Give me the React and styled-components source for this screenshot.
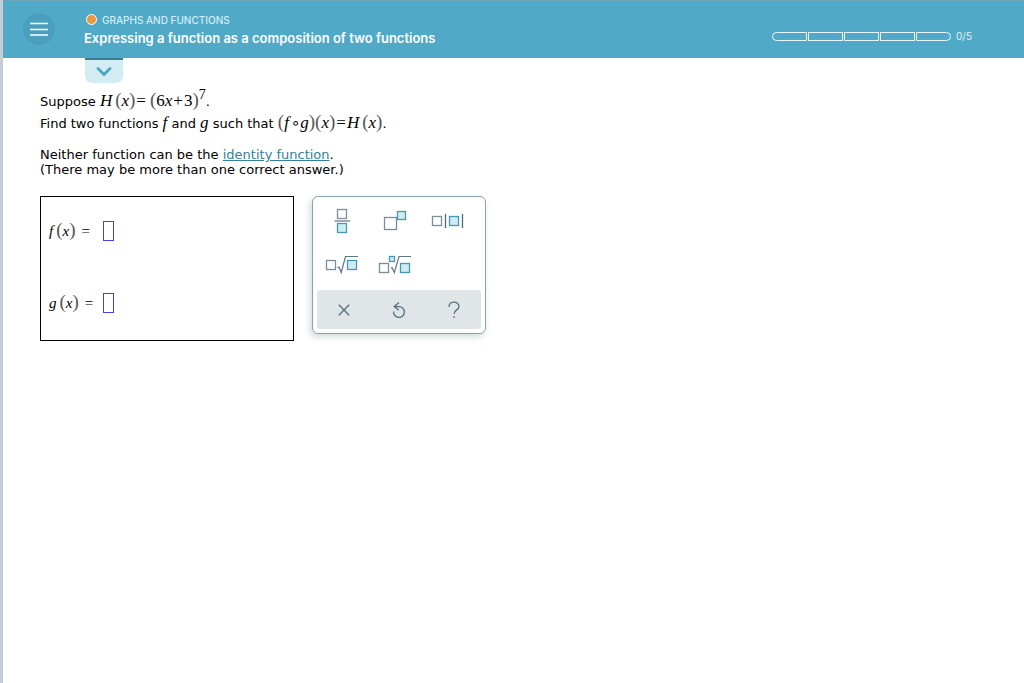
import React, { useState } from 'react';
import styled, { createGlobalStyle } from 'styled-components';

const SEGMENTS = [1, 2, 3, 4, 5];

const Box = ({ x, y, size, filled }) => (
  <rect
    x={x + 0.5}
    y={y + 0.5}
    width={size - 1}
    height={size - 1}
    fill={filled ? '#d0ebf2' : '#fff'}
    stroke={filled ? '#4599b4' : '#7b8f99'}
    strokeWidth="1.3"
  />
);

const KEYS = [
  {
    label: 'Fraction',
    icon: (
      <>
        <Box x={13} y={2} size={10} />
        <path d="M10.5 14H26" stroke="#7b8f99" strokeWidth="1.5" />
        <Box x={13} y={16} size={10} filled />
      </>
    ),
  },
  {
    label: 'Exponent',
    icon: (
      <>
        <Box x={7} y={10} size={13} />
        <Box x={20} y={4} size={9} filled />
      </>
    ),
  },
  {
    label: 'Absolute value',
    icon: (
      <>
        <Box x={2} y={9} size={10} />
        <path d="M15.5 7V21M32.5 7V21" stroke="#4f6b78" strokeWidth="1.3" />
        <Box x={19} y={9} size={10} filled />
      </>
    ),
  },
  {
    label: 'Square root',
    icon: (
      <>
        <Box x={2} y={10} size={10} />
        <path d="M13.5 17.5L15 17L17.2 22.5L21.5 6.5H34" stroke="#5c7683" strokeWidth="1.2" />
        <Box x={23} y={10} size={10} filled />
      </>
    ),
  },
  {
    label: 'Nth root',
    icon: (
      <>
        <Box x={2} y={13} size={10} />
        <path d="M14 18L15 17.5L17.3 22.5L22 6.5H34" stroke="#5c7683" strokeWidth="1.2" />
        <Box x={12} y={6} size={6} filled />
        <Box x={23} y={13} size={10} filled />
      </>
    ),
  },
];

const Fn = ({ name, arg = 'x' }) => (
  <>
    <Var>{name}</Var>
    <Paren $before>(</Paren>
    <Var>{arg}</Var>
    <Paren>)</Paren>
  </>
);

const App = () => {
  const [answers, setAnswers] = useState({ f: '', g: '' });

  const change = (name) => (e) => setAnswers({ ...answers, [name]: e.target.value });

  return (
    <Page>
      <GlobalStyle />
      <Header>
        <MenuButton aria-label="Menu">
          <svg width="18" height="14" viewBox="0 0 18 14" stroke="#fff" strokeWidth="1.4">
            <path d="M0 1.5H18M0 7.5H18M0 13H18" />
          </svg>
        </MenuButton>
        <Titles>
          <Topic>
            <Dot />
            GRAPHS AND FUNCTIONS
          </Topic>
          <Title>Expressing a function as a composition of two functions</Title>
        </Titles>
        <Progress>
          {SEGMENTS.map((n) => (
            <Segment key={n} />
          ))}
          <Score>0/5</Score>
        </Progress>
      </Header>
      <Drawer aria-label="Show details">
        <svg width="16" height="10" viewBox="0 0 16 10" fill="none" stroke="#4aa5c2" strokeWidth="2.8">
          <path d="M2 1.5L8 7.5L14 1.5" strokeLinecap="round" />
        </svg>
      </Drawer>

      <Content>
        <Line>
          Suppose{' '}
          <Formula>
            <Fn name="H" />
            <Op>=</Op>
            <Paren $before>(</Paren>6<Var>x</Var>
            <Op>+</Op>3<Paren>)</Paren>
            <Power>7</Power>
          </Formula>
          .
        </Line>
        <Line>
          Find two functions{' '}
          <Formula>
            <Var>f</Var>
          </Formula>{' '}
          and{' '}
          <Formula>
            <Var>g</Var>
          </Formula>{' '}
          such that{' '}
          <Formula>
            <Paren>(</Paren>
            <Var>f</Var>
            <Compose>∘</Compose>
            <Var>g</Var>
            <Paren>)</Paren>
            <Paren>(</Paren>
            <Var>x</Var>
            <Paren>)</Paren>
            <Op>=</Op>
            <Fn name="H" />
          </Formula>
          .
        </Line>
        <Note>
          Neither function can be the <Link href="#identity">identity function</Link>.
          <br />
          (There may be more than one correct answer.)
        </Note>

        <Work>
          <Answers>
            {['f', 'g'].map((name) => (
              <Answer key={name}>
                <Label htmlFor={name}>
                  <Fn name={name} />
                  <Equals>=</Equals>
                </Label>
                <Blank id={name} value={answers[name]} onChange={change(name)} />
              </Answer>
            ))}
          </Answers>

          <Palette>
            <Keys>
              {KEYS.map(({ label, icon }) => (
                <Key key={label} aria-label={label}>
                  <svg width="37" height="29" viewBox="0 0 37 29" fill="none">
                    {icon}
                  </svg>
                </Key>
              ))}
            </Keys>
            <Tools>
              <Tool aria-label="Clear" onClick={() => setAnswers({ f: '', g: '' })}>
                <svg width="20" height="20" viewBox="0 0 20 20">
                  <path d="M4.8 4.8L15.2 15.2M15.2 4.8L4.8 15.2" />
                </svg>
              </Tool>
              <Tool aria-label="Undo">
                <svg width="20" height="20" viewBox="0 0 20 20">
                  <path d="M4.6 11.5A5.4 5.4 0 1 0 10 6.6H5.5M10 2.6L5.3 6.6L9.6 10.2" />
                </svg>
              </Tool>
              <Tool aria-label="Help">
                <svg width="20" height="20" viewBox="0 0 20 20">
                  <path d="M5 7C5 0.6 15 0.6 15 6.4C15 10 10 9.8 10 14M10 16.2V18" />
                </svg>
              </Tool>
            </Tools>
          </Palette>
        </Work>
      </Content>
    </Page>
  );
};

const GlobalStyle = createGlobalStyle`
  * {
    box-sizing: border-box;
  }

  body {
    margin: 0;
    background: #fff;
  }

  button {
    display: flex;
    align-items: center;
    justify-content: center;
    padding: 0;
    border: none;
    background: none;
    cursor: pointer;
  }
`;

const Page = styled.div`
  min-height: 100vh;
  border-left: 3px solid #c3cdd3;
  font-family: 'DejaVu Sans', Verdana, sans-serif;
  font-size: 13px;
  color: #000;
`;

const Header = styled.header`
  display: flex;
  align-items: center;
  height: 58px;
  padding: 0 52px 2px 20px;
  border-top: 1px solid #6ea6b8;
  background: #50a9c6;
  color: #fff;
  font-family: Inter, sans-serif;
`;

const MenuButton = styled.button`
  width: 32px;
  height: 32px;
  border-radius: 50%;
  background: #4a9fbf;
`;

const Titles = styled.div`
  margin-left: 29px;
`;

const Topic = styled.div`
  display: flex;
  align-items: center;
  gap: 5px;
  padding-left: 2px;
  font-size: 10px;
  font-weight: 500;
  line-height: 18px;
  color: #d3edf4;
`;

const Dot = styled.span`
  width: 11px;
  height: 11px;
  border: 1px solid #fff;
  border-radius: 50%;
  background: #e8983e;
`;

const Title = styled.h1`
  margin: 0;
  font-size: 13px;
  font-weight: 600;
  line-height: 18px;
`;

const Progress = styled.div`
  display: flex;
  align-items: center;
  gap: 1px;
  margin-left: auto;
  padding-top: 15px;
`;

const Segment = styled.span`
  width: 35px;
  height: 9px;
  border: 1px solid #e9f6f9;

  &:first-child {
    border-radius: 5px 0 0 5px;
  }

  &:nth-child(5) {
    border-radius: 0 5px 5px 0;
  }
`;

const Score = styled.span`
  margin-left: 4px;
  font-size: 10px;
  line-height: 12px;
  color: #e0f2f6;
`;

const Drawer = styled.button`
  width: 38px;
  height: 25px;
  margin-left: 82px;
  border-top: 2px solid #3a7c94 !important;
  border-radius: 0 0 7px 7px;
  background: #d4edf3 !important;
`;

const Content = styled.main`
  padding: 8px 37px;
`;

const Line = styled.p`
  margin: 0;
  line-height: 22px;
`;

const Formula = styled.span`
  font-family: 'Liberation Serif', serif;
  font-size: 17px;
  line-height: 0;
`;

const Var = styled.i`
  font-style: italic;
`;

const Paren = styled.span`
  margin-left: ${({ $before }) => ($before ? '3px' : '0')};
  font-size: 19px;
  line-height: 0;
  color: #555;
`;

const Op = styled.span`
  margin: 0 1px;
`;

const Compose = styled.span`
  margin-left: 2px;
  font-family: 'DejaVu Sans', sans-serif;
  font-size: 15px;
`;

const Power = styled.sup`
  font-size: 14px;
  line-height: 0;
`;

const Note = styled.p`
  margin: 12px 0 0;
  line-height: 15px;
`;

const Link = styled.a`
  color: #35809a;
`;

const Work = styled.div`
  display: flex;
  flex-wrap: wrap;
  align-items: flex-start;
  gap: 18px;
  margin-top: 19px;
`;

const Answers = styled.div`
  width: 254px;
  padding: 24px 8px 27px;
  border: 1px solid #000;
`;

const Answer = styled.div`
  display: flex;
  align-items: center;
  height: 20px;

  & + & {
    margin-top: 52px;
  }
`;

const Label = styled.label`
  width: 54px;
  font-family: 'Liberation Serif', serif;
  font-size: 15px;
  line-height: 20px;
  white-space: nowrap;
`;

const Equals = styled.span`
  margin-left: 6px;
`;

const Blank = styled.input`
  width: 11px;
  height: 20px;
  padding: 0;
  border: 1px solid #4a3cf0;
  border-radius: 0;
  font-family: 'Liberation Serif', serif;
  font-size: 15px;
`;

const Palette = styled.div`
  width: 174px;
  border: 1px solid #8ba3ad;
  border-radius: 6px;
  box-shadow: -2px 3px 6px rgba(70, 110, 125, 0.25);
`;

const Keys = styled.div`
  display: grid;
  grid-template-columns: repeat(3, 53px);
  padding: 3px 2px 0 3px;
`;

const Key = styled.button`
  height: 43px;
`;

const Tools = styled.div`
  display: grid;
  grid-template-columns: repeat(3, 1fr);
  height: 39px;
  margin: 4px;
  border-radius: 3px;
  background: #e0e6e8;
`;

const Tool = styled.button`
  svg {
    fill: none;
    stroke: #4f6f80;
    stroke-width: 1.3;
  }
`;

export default App;
